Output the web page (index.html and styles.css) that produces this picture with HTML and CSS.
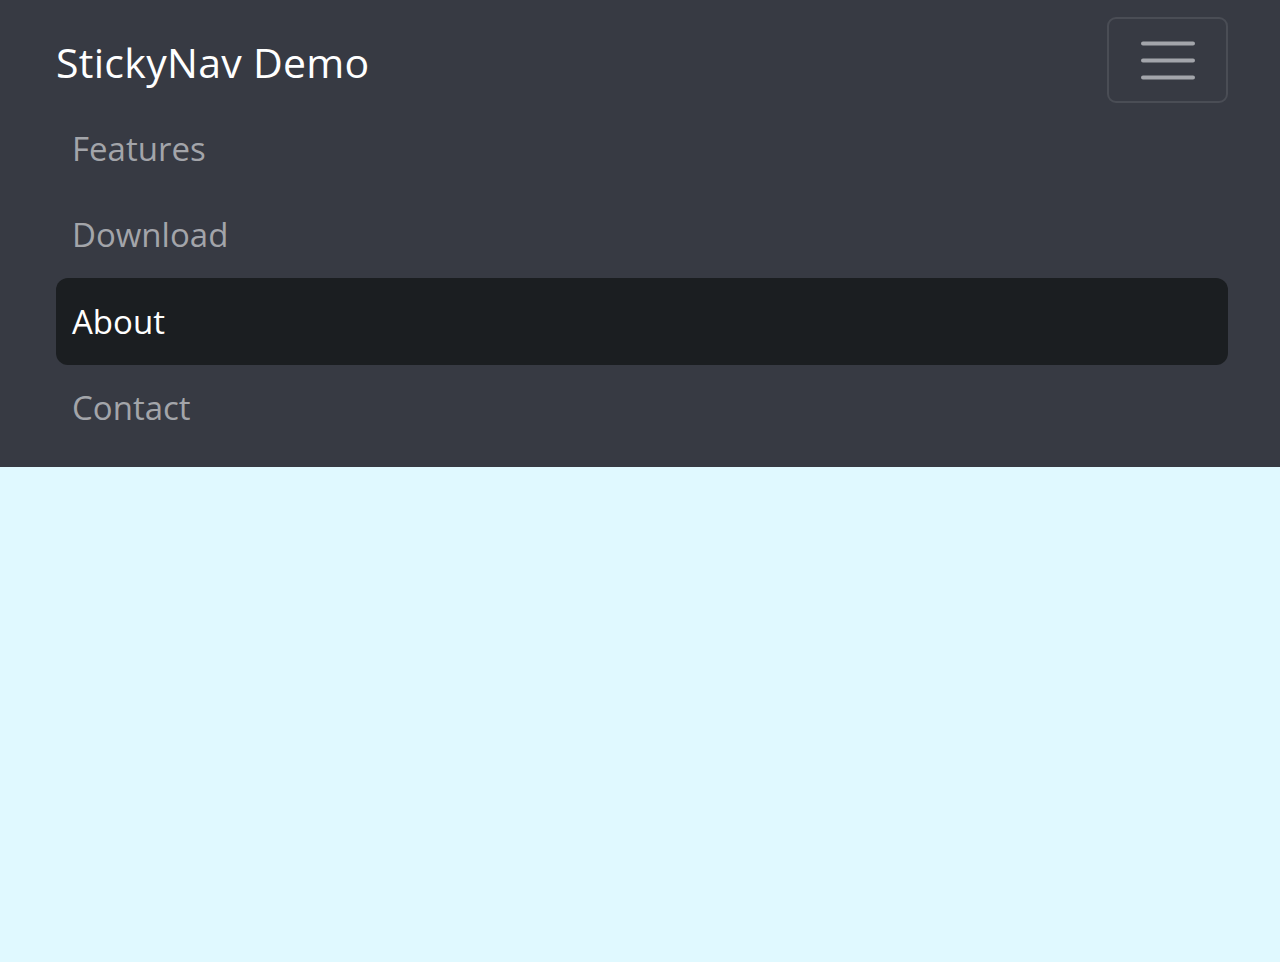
FILE: index.html
```html
<!DOCTYPE html>
<html lang="en">
<head>
<meta charset="utf-8">
<title>StickyNav Demo</title>
<link rel="stylesheet" href="styles.css">
</head>
<body>
<nav class="navbar">
  <div class="navbar-inner">
    <div class="navbar-top">
      <a class="brand" href="#">StickyNav Demo</a>
      <button class="toggler" type="button" aria-label="Toggle navigation">
        <svg class="toggler-icon" width="56" height="42" viewBox="0 0 56 42">
          <path d="M3 4.5H53M3 21.5H53M3 38.5H53" stroke="#a3a5ab" stroke-width="4" stroke-linecap="round" fill="none"/>
        </svg>
      </button>
    </div>
    <ul class="nav-list">
      <li><a class="nav-link" href="#">Features</a></li>
      <li><a class="nav-link" href="#">Download</a></li>
      <li><a class="nav-link active" href="#">About</a></li>
      <li><a class="nav-link" href="#">Contact</a></li>
    </ul>
  </div>
</nav>
<main class="content"></main>
</body>
</html>
```

FILE: styles.css
```css
* { box-sizing: border-box; }
html, body {
  margin: 0;
  padding: 0;
  height: 100%;
}
body {
  background: #e0f9ff;
  font-family: "Open Sans", "Noto Sans", sans-serif;
}
.navbar {
  background: #373a43;
  padding: 17px 0 16px;
}
.navbar-inner {
  padding: 0 52px 0 56px;
}
.navbar-top {
  display: flex;
  align-items: center;
  justify-content: space-between;
  height: 86px;
}
.brand {
  color: #ffffff;
  text-decoration: none;
  font-size: 41px;
  line-height: 1;
  margin-top: 4px;
  letter-spacing: 0.3px;
}
.toggler {
  width: 121px;
  height: 86px;
  border: 2px solid #4a4d55;
  border-radius: 9px;
  background: transparent;
  display: flex;
  align-items: center;
  justify-content: center;
  padding: 0;
  margin-right: 0;
}
.toggler-icon { display: block; }
.nav-list {
  list-style: none;
  margin: 2px 0 0;
  padding: 0;
  display: flex;
  flex-direction: column;
}
.nav-link {
  display: flex;
  align-items: center;
  height: 86.5px;
  padding: 0 16px;
  font-size: 33px;
  color: #a3a5aa;
  text-decoration: none;
  border-radius: 12px;
}
.nav-link.active {
  background: #1b1e21;
  color: #ffffff;
}
```
